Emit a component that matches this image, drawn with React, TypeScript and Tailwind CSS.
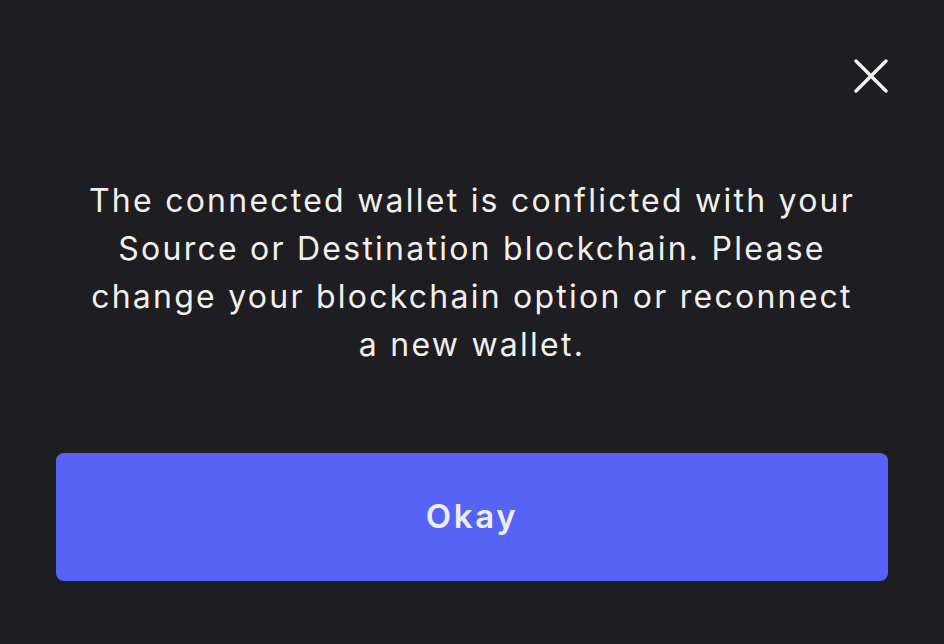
import React from "react";

export default function App() {
  return (
    <div
      className="w-[944px] h-[644px] bg-[#1e1d22] flex flex-col px-[56px] pt-[59px]"
      style={{ fontFamily: "Inter, 'Noto Sans', sans-serif" }}
    >
      <div className="flex justify-end">
        <button className="w-[34px] h-[34px] flex items-center justify-center">
          <svg width="34" height="34" viewBox="0 0 34 34" fill="none">
            <path d="M2 2L32 32M32 2L2 32" stroke="#f2f1ee" strokeWidth="3.4" strokeLinecap="round" />
          </svg>
        </button>
      </div>
      <p className="mt-[84px] text-center text-[32px] leading-[48px] text-[#f2f0ec] tracking-[0.07em] font-normal">
        The connected wallet is conflicted with your
        <br />
        Source or Destination blockchain. Please
        <br />
        change your blockchain option or reconnect
        <br />
        a new wallet.
      </p>
      <button className="mt-[84px] h-[128px] w-full rounded-[8px] bg-[#5664f5] text-[#eceeff] text-[33px] font-semibold tracking-[0.08em]">
        Okay
      </button>
    </div>
  );
}
